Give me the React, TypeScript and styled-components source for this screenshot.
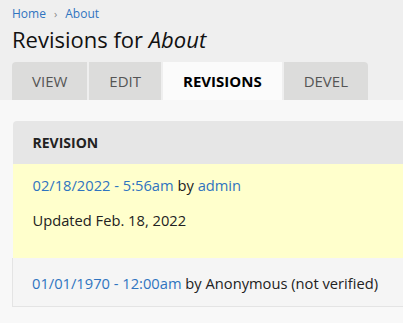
import styled, { createGlobalStyle } from 'styled-components';

const GlobalStyle = createGlobalStyle`
  html, body {
    margin: 0;
    padding: 0;
    background: #f8f8f8;
    overflow: hidden;
  }
  body {
    font-family: 'Open Sans', 'DejaVu Sans', sans-serif;
    color: #222;
  }
`;

const Header = styled.header`
  background: #efefef;
  padding: 4px 12px 0;
`;

const Breadcrumb = styled.nav`
  display: flex;
  align-items: center;
  gap: 8px;
  font-size: 12px;
  line-height: 20px;
`;

const Crumb = styled.a`
  color: #2f74c0;
  text-decoration: none;
`;

const Separator = styled.span`
  color: #888;
  font-size: 11px;
`;

const Title = styled.h1`
  margin: 0;
  font-size: 22px;
  font-weight: 400;
  line-height: 30px;
  color: #111;

  em {
    font-style: italic;
  }
`;

const Tabs = styled.ul`
  display: flex;
  gap: 2px;
  margin: 8px 0 0;
  padding: 0;
  list-style: none;
`;

const Tab = styled.li<{ $active?: boolean; $first?: boolean; $last?: boolean }>`
  height: 38px;
  display: flex;
  align-items: center;
  padding: 0 20px;
  font-size: 15px;
  text-transform: uppercase;
  background: ${(p) => (p.$active ? '#fbfbfb' : '#dcdcdb')};
  color: ${(p) => (p.$active ? '#000' : '#555')};
  font-weight: ${(p) => (p.$active ? 700 : 400)};
  border-radius: ${(p) => (p.$first ? '4px 0 0 0' : p.$last ? '0 4px 0 0' : '0')};
`;

const Content = styled.main`
  padding: 21px 0 0 12px;
`;

const Table = styled.table`
  width: 560px;
  border-collapse: collapse;
  font-size: 14.7px;
`;

const HeadCell = styled.th`
  background: #e6e6e6;
  text-align: left;
  font-size: 14px;
  font-weight: 700;
  text-transform: uppercase;
  height: 43px;
  padding: 0 20px;
  border-radius: 4px 0 0 0;
`;

const Cell = styled.td<{ $current?: boolean }>`
  background: ${(p) => (p.$current ? '#ffffcc' : '#f5f5f5')};
  border-left: ${(p) => (p.$current ? 'none' : '1px solid #e4e4e4')};
  border-bottom: ${(p) => (p.$current ? 'none' : '1px solid #e4e4e4')};
  padding: ${(p) => (p.$current ? '10px 20px 0' : '14px 20px 12px 19px')};
  line-height: 22px;
  vertical-align: top;
`;

const RevLink = styled.a`
  color: #2f74c0;
  text-decoration: none;
`;

const Message = styled.p`
  margin: 13px 0 27px;
`;

export default function App() {
  return (
    <>
      <GlobalStyle />
      <Header>
        <Breadcrumb>
          <Crumb href="#">Home</Crumb>
          <Separator>›</Separator>
          <Crumb href="#">About</Crumb>
        </Breadcrumb>
        <Title>
          Revisions for <em>About</em>
        </Title>
        <Tabs>
          <Tab $first>View</Tab>
          <Tab>Edit</Tab>
          <Tab $active>Revisions</Tab>
          <Tab $last>Devel</Tab>
        </Tabs>
      </Header>
      <Content>
        <Table>
          <thead>
            <tr>
              <HeadCell>Revision</HeadCell>
            </tr>
          </thead>
          <tbody>
            <tr>
              <Cell $current>
                <RevLink href="#">02/18/2022 - 5:56am</RevLink> by{' '}
                <RevLink href="#">admin</RevLink>
                <Message>Updated Feb. 18, 2022</Message>
              </Cell>
            </tr>
            <tr>
              <Cell>
                <RevLink href="#">01/01/1970 - 12:00am</RevLink> by Anonymous
                (not verified)
              </Cell>
            </tr>
          </tbody>
        </Table>
      </Content>
    </>
  );
}
